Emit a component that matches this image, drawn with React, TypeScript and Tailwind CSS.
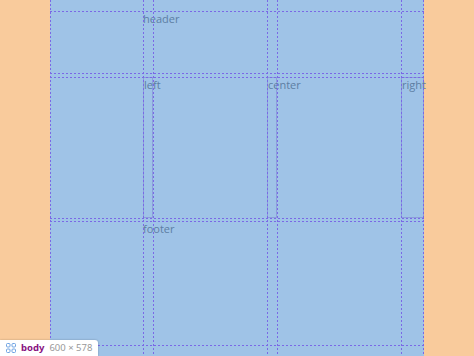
import type { ReactNode } from 'react'

const font = { fontFamily: '"Open Sans", "Noto Sans", sans-serif' }

function Label({ children }: { children: ReactNode }) {
  return (
    <span className="block whitespace-nowrap text-[11px] leading-[14px] text-[#5d7ea3]">
      {children}
    </span>
  )
}

// vertical overlay lines, x relative to blue area
const vLines = [0, 93, 103, 217, 227, 351, 373]
// horizontal overlay lines, y
const hLines = [11, 73, 77, 218, 221, 345]

export default function App() {
  return (
    <div className="relative flex h-[356px] w-[474px] overflow-hidden bg-[#f9cb9c]" style={font}>
      <div className="w-[50px] shrink-0" />
      <div className="relative h-full w-[374px] shrink-0 bg-[#9fc3e7]">
        <div className="grid grid-cols-[93px_10px_114px_10px_124px_23px] grid-rows-[11px_62px_4px_141px_3px_124px_11px]">
          <div className="col-start-2 col-end-7 row-start-2">
            <div className="pt-[1px]">
              <Label>header</Label>
            </div>
          </div>
          <div className="col-start-2 row-start-4 border border-[#6f66c7]/40">
            <Label>left</Label>
          </div>
          <div className="col-start-4 row-start-4 border border-[#6f66c7]/40">
            <Label>center</Label>
          </div>
          <div className="col-start-6 row-start-4 border border-[#6f66c7]/40">
            <Label>right</Label>
          </div>
          <div className="col-start-2 col-end-7 row-start-6">
            <div className="pt-[1px]">
              <Label>footer</Label>
            </div>
          </div>
        </div>

        {/* grid overlay lines */}
        {vLines.map((x) => (
          <div
            key={'v' + x}
            className="pointer-events-none absolute top-0 h-full w-px bg-[repeating-linear-gradient(to_bottom,#7a68e6_0_2px,transparent_2px_4px)]"
            style={{ left: x }}
          />
        ))}
        {hLines.map((y) => (
          <div
            key={'h' + y}
            className="pointer-events-none absolute left-0 h-px w-full bg-[repeating-linear-gradient(to_right,#7a68e6_0_2px,transparent_2px_4px)]"
            style={{ top: y }}
          />
        ))}
      </div>
      <div className="flex-1" />

      {/* devtools badge */}
      <div
        className="absolute bottom-0 left-0 flex h-[16px] items-center whitespace-nowrap rounded-tr-[3px] bg-white pl-[6px] pr-[6px] shadow-[0_0_2px_rgba(0,0,0,0.3)]"
        style={{ fontFamily: '"Noto Sans", "Open Sans", sans-serif' }}
      >
        <svg className="shrink-0" width="10" height="10" viewBox="0 0 10 10" fill="none" stroke="#6fa3e3" strokeWidth="1">
          <rect x="0.5" y="0.5" width="3.5" height="3.5" rx="1" />
          <rect x="6" y="0.5" width="3.5" height="3.5" rx="1" />
          <rect x="0.5" y="6" width="3.5" height="3.5" rx="1" />
          <rect x="6" y="6" width="3.5" height="3.5" rx="1" />
        </svg>
        <span className="ml-[5px] shrink-0 text-[9.5px] font-bold leading-none text-[#881280]">body</span>
        <span className="ml-[5px] shrink-0 text-[9.5px] leading-none text-[#999]">600 × 578</span>
      </div>
    </div>
  )
}
